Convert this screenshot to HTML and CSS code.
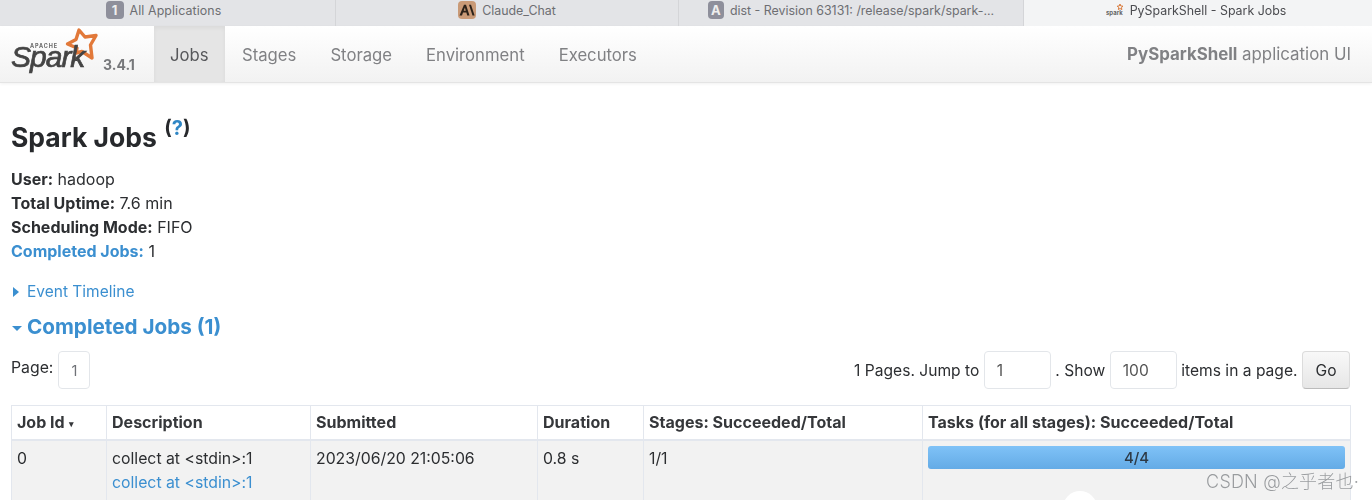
FILE: index.html
```html
<!DOCTYPE html>
<html lang="en">
<head>
<meta charset="utf-8">
<title>PySparkShell - Spark Jobs</title>
<link rel="stylesheet" href="styles.css">
</head>
<body>
<div class="page">
  <div class="tabs">
    <div class="tab tab-first"><span class="fav fav-grey">1</span><span>All Applications</span></div>
    <div class="tab"><span class="fav fav-claude"><svg width="16" height="12" viewBox="0 0 16 12"><path d="M0.5 11.5 L5 0.8 H7 L10.5 11.5 H8.2 L7.4 8.6 H4 L3 11.5Z M4.7 6.8 H6.8 L5.9 3.6Z" fill="#2b2119"/><path d="M10 0.8 H12 L15.6 11.5 H13.5Z" fill="#2b2119"/></svg></span><span>Claude_Chat</span></div>
    <div class="tab"><span class="fav fav-narrow">A</span><span>dist - Revision 63131: /release/spark/spark-...</span></div>
    <div class="tab tab-active"><svg class="mini" width="18" height="16" viewBox="0 0 18 16"><path d="M14 2 L14.8 4 L17 4.2 L15.4 5.6 L15.9 7.6 L14 6.5 L12.4 7.6 L12.8 5.6 L11.2 4.2 L13.2 4Z" fill="none" stroke="#d9793a" stroke-width="1"/><text x="0" y="12.5" class="mini-text">spark</text></svg><span>PySparkShell - Spark Jobs</span></div>
  </div>
  <nav class="navbar">
    <div class="brand">
      <svg class="logo" width="100" height="48" viewBox="0 0 100 48">
        <path d="M78 3 L84 10 L95 8.5 L89.5 18 L91 31 L81 24.5 L75 26 L76 21 L66.5 17 L75 12.5Z" fill="none" stroke="#e2793a" stroke-width="3.4" stroke-linejoin="round"/>
        <text x="29" y="21" class="logo-apache">APACHE</text>
        <text x="10" y="40" class="logo-spark">Spark</text>
      </svg>
      <span class="version">3.4.1</span>
    </div>
    <ul class="nav">
      <li class="nav-item active">Jobs</li>
      <li class="nav-item">Stages</li>
      <li class="nav-item">Storage</li>
      <li class="nav-item">Environment</li>
      <li class="nav-item">Executors</li>
    </ul>
    <div class="app-name"><strong>PySparkShell</strong> application UI</div>
  </nav>
  <main class="content">
    <h3 class="title">Spark Jobs <sup class="help">(<a>?</a>)</sup></h3>
    <ul class="summary">
      <li><strong>User:</strong> hadoop</li>
      <li><strong>Total Uptime:</strong> 7.6 min</li>
      <li><strong>Scheduling Mode:</strong> FIFO</li>
      <li><a class="link"><strong>Completed Jobs:</strong></a> 1</li>
    </ul>
    <div class="timeline"><span class="arrow-right"></span><a class="link">Event Timeline</a></div>
    <h4 class="section"><span class="arrow-down"></span>Completed Jobs (1)</h4>
    <div class="pager">
      <div class="pager-left"><span class="page-label">Page:</span><span class="page-box">1</span></div>
      <div class="pager-right">
        <span>1 Pages. Jump to</span><span class="field">1</span>
        <span>. Show</span><span class="field">100</span>
        <span>items in a page.</span><span class="go">Go</span>
      </div>
    </div>
    <table class="jobs">
      <colgroup><col class="c1"><col class="c2"><col class="c3"><col class="c4"><col class="c5"><col class="c6"></colgroup>
      <thead>
        <tr><th>Job Id <span class="sort">▾</span></th><th>Description</th><th>Submitted</th><th>Duration</th><th>Stages: Succeeded/Total</th><th>Tasks (for all stages): Succeeded/Total</th></tr>
      </thead>
      <tbody>
        <tr>
          <td>0</td>
          <td>collect at &lt;stdin&gt;:1<br><a class="link">collect at &lt;stdin&gt;:1</a></td>
          <td>2023/06/20 21:05:06</td>
          <td>0.8 s</td>
          <td>1/1</td>
          <td class="cell-bar"><div class="bar">4/4</div></td>
        </tr>
      </tbody>
    </table>
  </main>
  <div class="watermark">CSDN @之乎者也·</div>
  <div class="wm-circle"></div>
</div>
</body>
</html>
```

FILE: styles.css
```css
* { box-sizing: border-box; }
html, body { margin: 0; height: 500px; overflow: hidden; background: #fff; }
body { font-family: Inter, "Noto Sans CJK SC", sans-serif; color: #2c2e31; font-size: 15.8px; }
.page { position: relative; height: 500px; overflow: hidden; filter: blur(0.5px); }

.tabs { display: grid; grid-template-columns: 336px 343px 345px 1fr; height: 26px; background: #e3e4e7; }
.tab { display: flex; align-items: center; justify-content: center; gap: 6px; padding-bottom: 6px; font-size: 12.4px; color: #6d6e72; border-right: 1px solid #d4d5d8; white-space: nowrap; }
.tab-first { padding-right: 8px; letter-spacing: 0.1px; }
.tab-active { background: #f3f4f5; color: #4b4c50; border-right: 0; padding-right: 4px; }
.fav { width: 18px; height: 18px; border-radius: 4px; display: flex; align-items: center; justify-content: center; font-size: 13px; font-weight: 700; }
.fav-grey { background: #8e8f9b; color: #eee; }
.fav-narrow { width: 16px; height: 18px; border-radius: 4px; display: flex; align-items: center; justify-content: center; font-size: 13px; font-weight: 700; background: #8e8f9b; color: #eee; }
.fav-claude { background: #c99a77; }
.mini { flex: none; }
.mini-text { font-size: 6px; font-weight: 700; fill: #666; }

.navbar { display: flex; align-items: stretch; height: 57px; background: linear-gradient(#fff, #f2f2f2); border-bottom: 1px solid #e4e4e4; box-shadow: 0 1px 3px rgba(0,0,0,.06); }
.brand { width: 154px; position: relative; flex: none; }
.logo { position: absolute; left: 1px; top: 1px; }
.logo-apache { font: 700 5.5px Inter, sans-serif; fill: #666; letter-spacing: 0.9px; }
.logo-spark { font: italic 400 30px "Liberation Sans", sans-serif; fill: #444; stroke: #444; stroke-width: .7px; letter-spacing: -1px; }
.version { position: absolute; left: 103px; top: 30px; font-size: 14px; font-weight: 700; color: #77787b; }
.nav { display: flex; list-style: none; margin: 0; padding: 0; }
.nav-item { display: flex; align-items: center; padding: 2px 17px 0; font-size: 16.7px; color: #808184; }
.nav-item.active { width: 71px; padding-left: 16px; padding-right: 0; background: #e5e5e5; color: #56575a; box-shadow: inset 0 2px 4px rgba(0,0,0,.05); }
.app-name { margin-left: auto; padding-right: 21px; align-self: center; font-size: 16.85px; color: #808184; }
.app-name strong { font-weight: 700; }

.content { padding: 0 22px 0 11px; }
.title { margin: 39px 0 0; height: 31px; font-size: 26.5px; line-height: 31px; font-weight: 700; color: #27292c; white-space: nowrap; }
.help { font-size: 20px; line-height: 0; vertical-align: 12px; margin-left: 1px; }
.help a { color: #2f86c5; }
.summary { list-style: none; margin: 14px 0 0; padding: 0; }
.summary li { height: 24px; line-height: 24px; font-size: 16px; }
.summary strong { font-weight: 700; }
.link { color: #3b8fd0; }
.timeline { margin-top: 17px; height: 24px; line-height: 24px; font-size: 15.5px; display: flex; align-items: center; }
.arrow-right { width: 0; height: 0; border-left: 6px solid #3b8fd0; border-top: 5px solid transparent; border-bottom: 5px solid transparent; margin: 0 8px 0 2px; }
.section { margin: 10px 0 0; height: 26px; line-height: 26px; font-size: 20.7px; font-weight: 700; color: #3b8fd0; display: flex; align-items: center; white-space: nowrap; }
.arrow-down { width: 0; height: 0; border-top: 5px solid #3b8fd0; border-left: 5px solid transparent; border-right: 5px solid transparent; margin: 3px 5px 0 1px; }

.pager { display: flex; justify-content: space-between; margin-top: 11px; height: 38px; }
.pager-left { display: flex; align-items: flex-start; gap: 5px; }
.page-label { line-height: 34px; }
.page-box { width: 32px; height: 38px; border: 1px solid #e3e6ea; border-radius: 4px; display: flex; align-items: center; justify-content: center; color: #6f7277; font-size: 14.5px; }
.pager-right { display: flex; align-items: center; gap: 4.5px; font-size: 15.6px; }
.field { width: 67px; height: 38px; border: 1px solid #e3e6ea; border-radius: 4px; display: flex; align-items: center; padding-left: 12px; color: #555; font-size: 15.6px; }
.go { width: 48px; height: 38px; border: 1px solid #dcdcdc; border-bottom-color: #bbb; border-radius: 4px; background: linear-gradient(#f8f8f8, #e6e6e6); display: flex; align-items: center; justify-content: center; }

.jobs { width: 1339px; margin-top: 16px; border-collapse: collapse; table-layout: fixed; border: 1px solid #e3e7ee; }
.c1 { width: 95px; } .c2 { width: 204px; } .c3 { width: 227px; } .c4 { width: 106px; } .c5 { width: 279px; } .c6 { width: 428px; }
.jobs th { height: 34px; padding: 0 5px; text-align: left; font-size: 16.05px; font-weight: 700; color: #35373a; border-left: 1px solid #e3e7ee; border-bottom: 2px solid #e3e7ee; background: #fff; white-space: nowrap; }
.jobs td { padding: 6px 5px 0; height: 80px; vertical-align: top; line-height: 24px; border-left: 1px solid #e3e7ee; background: #f2f2f2; }
.sort { font-size: 9px; vertical-align: 1px; }
.jobs .cell-bar { padding: 5px 5px 0; }
.bar { height: 23px; line-height: 24px; border-radius: 3px; background: linear-gradient(#7fc2f7, #64abe6); text-align: center; font-size: 15px; font-weight: 500; color: #2d3a46; }

.watermark { position: absolute; right: 13px; top: 467px; font-size: 18px; letter-spacing: 0.2px; color: #8a8d90; font-weight: 300; opacity: .85; text-shadow: 0 0 1px #fff; }
.wm-circle { position: absolute; left: 1063px; top: 491px; width: 34px; height: 34px; border-radius: 50%; background: #fff; }
```
